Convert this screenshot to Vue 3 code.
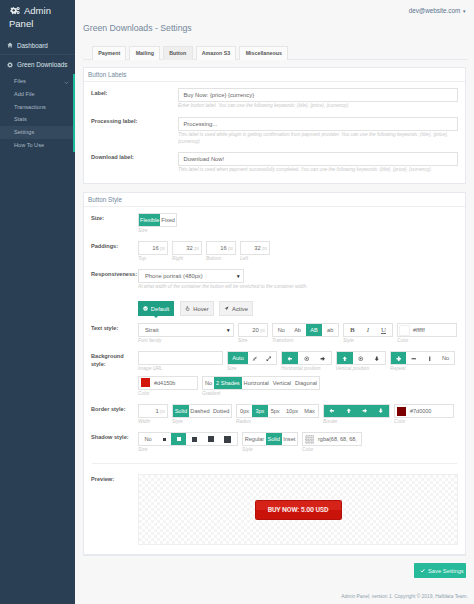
<script setup>
const nav = ['Files', 'Add File', 'Transactions', 'Stats', 'Settings', 'How To Use']
const tabs = ['Payment', 'Mailing', 'Button', 'Amazon S3', 'Miscellaneous']
const labels = [
  { label: 'Label:', value: 'Buy Now: {price} {currency}', hint: 'Enter button label. You can use the following keywords: {title}, {price}, {currency}.' },
  { label: 'Processing label:', value: 'Processing...', hint: 'This label is used while plugin is getting confirmation from payment provider. You can use the following keywords: {title}, {price}, {currency}.' },
  { label: 'Download label:', value: 'Download Now!', hint: 'This label is used when payment successfully completed. You can use the following keywords: {title}, {price}, {currency}.' }
]
const L = 'left', R = 'right', U = 'up', D = 'down'
const seg = (w, hint, items, on) => ({ t: 'seg', w, hint, items, on })
const num = (w, hint, val) => ({ t: 'num', w, hint, val })
const rows = [
  { label: 'Size:', ctls: [seg(39, 'Size', ['Flexible', 'Fixed'], [0])] },
  { label: 'Paddings:', ctls: [num(30, 'Top', 16), num(30, 'Right', 32), num(30, 'Bottom', 16), num(30, 'Left', 32)] },
  { label: 'Responsiveness:', ctls: [{ t: 'sel', w: 106, hint: 'At what width of the container the button will be stretched to the container width.', val: 'Phone portrait (480px)' }] },
  { states: true },
  { label: 'Text style:', ctls: [
    { t: 'sel', w: 96, hint: 'Font family', val: 'Strait' }, num(30, 'Size', 20),
    seg(67, 'Transform', ['No', 'Ab', 'AB', 'ab'], [2]), seg(50, 'Style', ['B', 'I', 'U'], []),
    { t: 'color', w: 60, hint: 'Color', val: '#ffffff', sw: 'white' }] },
  { label: 'Background style:', ctls: [
    { t: 'txt', w: 85, hint: 'Image URL', val: '' },
    seg(50, 'Size', ['Auto', { i: 'shrink' }, { i: 'grow' }], [0]),
    seg(50.5, 'Horizontal position', [{ i: L }, { i: 'dot' }, { i: R }], [0]),
    seg(50.5, 'Vertical position', [{ i: U }, { i: 'dot' }, { i: D }], [0]),
    seg(65, 'Repeat', [{ i: 'plus' }, { i: 'h' }, { i: 'v' }, 'No'], [0])] },
  { tight: true, ctls: [
    { t: 'color', w: 60, hint: 'Color', val: '#d4150b', sw: 'red' },
    seg(118, 'Gradient', ['No', '2 Shades', 'Horizontal', 'Vertical', 'Diagonal'], [1])] },
  { label: 'Border style:', ctls: [
    num(30, 'Width', 1), seg(60, 'Style', ['Solid', 'Dashed', 'Dotted'], [0]),
    seg(83, 'Radius', ['0px', '3px', '5px', '10px', 'Max'], [1]),
    seg(67, 'Border', [{ i: L }, { i: U }, { i: R }, { i: D }], [0, 1, 2, 3]),
    { t: 'color', w: 60, hint: 'Color', val: '#7d0000', sw: 'dark' }] },
  { label: 'Shadow style:', ctls: [
    seg(100, 'Size', ['No', { s: 3 }, { s: 4 }, { s: 5 }, { s: 6 }, { s: 7 }], [2]),
    seg(56, 'Style', ['Regular', 'Solid', 'Inset'], [1]),
    { t: 'color', w: 60, hint: 'Color', val: 'rgba(68, 68, 68,', sw: 'check' }] }
]
const paths = {
  left: 'M1 5 5 1v2.500h4v3H5V9z',
  right: 'M9 5 5 1v2.500H1v3h4V9z',
  up: 'M5 1 1 5h2.500v4h3V5H9z',
  down: 'M5 9 1 5h2.500V1h3v4H9z',
  plus: 'M3.500 1h3v2.500H9v3H6.500V9h-3V6.500H1v-3h2.500z',
  shrink: 'M9 1.500 8.500 1 6 3.500V2H5v3h3V4H6.500zM1 8.500l.5.5L4 6.500V8h1V5H2v1h1.500z',
  grow: 'M6 1h3v3H8V2.700L2.700 8H4v1H1V6h1v1.300L7.300 2H6z',
  h: 'M1 4h8v2H1z',
  v: 'M4 1h2v8H4z'
}
</script>

<template>
  <div class="page">
    <aside class="side">
      <div class="brand">
        <svg class="cogs" viewBox="0 0 16 12"><path d="M5.500 1.500 7 1l.8 1.300 1.500.4L10.500 2l1 1.200-.7 1.300.4 1.500 1.300.7-.4 1.500H10.600l-.8 1.300.5 1.400-1.400.7-1-1.100H6.500l-.9 1.100-1.400-.6.400-1.400-1-1.200L2 7.500l-.3-1.500 1.300-.6.200-1.500-1-1 .9-1.200 1.400.6 1.200-.6z" fill="#ecf0f1"/><circle cx="6.800" cy="5.800" r="1.700" fill="#2a3f54"/><circle cx="13.300" cy="3" r="2.200" fill="#ecf0f1"/><circle cx="13.300" cy="3" r=".8" fill="#2a3f54"/><circle cx="13.300" cy="9" r="2.200" fill="#ecf0f1"/><circle cx="13.300" cy="9" r=".8" fill="#2a3f54"/></svg>
        <span>Admin</span><br>Panel
      </div>
      <div class="menu first">
        <svg class="mi" viewBox="0 0 10 10"><path d="M5 1 .5 5H2v4h2.200V6.500h1.600V9H8V5h1.500z" fill="#b8c7ce"/></svg>Dashboard
      </div>
      <div class="menu">
        <svg class="mi" viewBox="0 0 10 10"><circle cx="5" cy="5" r="2.800" fill="none" stroke="#b8c7ce" stroke-width="2"/><circle cx="5" cy="5" r="4.200" fill="none" stroke="#b8c7ce" stroke-width="1.200" stroke-dasharray="1.500 1.800"/></svg>Green Downloads
      </div>
      <ul class="sub">
        <li v-for="(n, i) in nav" :key="n" :class="{ cur: n === 'Settings' }">
          {{ n }}
          <svg v-if="i === 0" class="chev" viewBox="0 0 8 5"><path d="M1 1l3 3 3-3" fill="none" stroke="#8a9aa8" stroke-width="1"/></svg>
        </li>
      </ul>
      <i class="accent"></i>
    </aside>

    <main class="main">
      <header class="top">dev@website.com <span class="caret">▾</span></header>
      <h1 class="title">Green Downloads - Settings</h1>
      <nav class="tabs">
        <span v-for="t in tabs" :key="t" class="tab" :class="{ on: t === 'Button' }">{{ t }}</span>
      </nav>

      <section class="panel">
        <h2 class="phead">Button Labels</h2>
        <div class="lbody">
          <div v-for="f in labels" :key="f.label" class="lrow">
            <label class="llab">{{ f.label }}</label>
            <div class="lctl">
              <div class="box wide">{{ f.value }}</div>
              <div class="hint">{{ f.hint }}</div>
            </div>
          </div>
        </div>
      </section>

      <section class="panel second">
        <h2 class="phead">Button Style</h2>
        <div class="sbody">
          <template v-for="(r, ri) in rows" :key="ri">
            <div v-if="r.states" class="states">
              <span class="state act">
                <svg viewBox="0 0 10 10"><circle cx="5" cy="5" r="4.500" fill="#fff"/><path d="M2.800 5 4.500 6.700 7.400 3.500" fill="none" stroke="#1f9f83" stroke-width="1.300"/></svg>Default
              </span>
              <span class="state">
                <svg viewBox="0 0 10 10"><path d="M3.500 9 1.800 5.500l1 0 .9 1V1.500a.7.7 0 0 1 1.400 0V4l3 .8V7L7.300 9z" fill="none" stroke="#444" stroke-width=".9"/></svg>Hover
              </span>
              <span class="state">
                <svg viewBox="0 0 10 10"><path d="M9 1 1 5h4v4z" fill="#333"/></svg>Active
              </span>
            </div>
            <div v-else class="srow" :class="{ tight: r.tight }">
              <label class="slab">{{ r.label }}</label>
              <div class="ctls">
                <div v-for="(c, ci) in r.ctls" :key="ci" class="ctl" :style="{ width: c.w + 'px' }">
                  <div v-if="c.t === 'seg'" class="seg">
                    <span v-for="(it, ii) in c.items" :key="ii" class="si" :class="{ on: c.on.includes(ii), b: it === 'B', it: it === 'I', u: it === 'U' }">
                      <template v-if="typeof it === 'string'">{{ it }}</template>
                      <svg v-else-if="it.i === 'dot'" class="ic" viewBox="0 0 10 10"><circle cx="5" cy="5" r="3.500" fill="none" stroke="currentColor" stroke-width="1.100"/><circle cx="5" cy="5" r="1.300" fill="currentColor"/></svg>
                      <svg v-else-if="it.i" class="ic" viewBox="0 0 10 10"><path :d="paths[it.i]" fill="currentColor"/></svg>
                      <i v-else class="sq" :style="{ width: it.s + 'px', height: it.s + 'px' }"></i>
                    </span>
                  </div>
                  <div v-else-if="c.t === 'num'" class="box num">{{ c.val }}<em>px</em></div>
                  <div v-else-if="c.t === 'sel'" class="box sel">{{ c.val }}<b>▾</b></div>
                  <div v-else-if="c.t === 'color'" class="box color"><i class="sw" :class="c.sw"></i><span>{{ c.val }}</span></div>
                  <div v-else class="box"></div>
                  <div class="hint nowrap">{{ c.hint }}</div>
                </div>
              </div>
            </div>
          </template>
          <hr class="rule">
          <div class="prow">
            <label class="slab">Preview:</label>
            <div class="preview"><span class="buy">BUY NOW: 5.00 USD</span></div>
          </div>
        </div>
      </section>

      <div class="actions">
        <span class="save">
          <svg viewBox="0 0 10 10"><path d="M1.500 5.500 4 8 8.800 2.500" fill="none" stroke="#fff" stroke-width="1.800"/></svg>Save Settings
        </span>
      </div>
      <footer class="foot">Admin Panel, version 1. Copyright © 2019, Halfdata Team.</footer>
    </main>
  </div>
</template>

<style scoped>
.page { display: flex; width: 474px; height: 604px; overflow: hidden; font-family: "Liberation Sans", Arial, sans-serif; font-size: 6px; color: #73879c; background: #f7f7f7; }
.side { position: relative; flex: none; width: 75px; background: #2a3f54; color: #dfe5ea; }
.brand { padding: 4px 0 0 9px; height: 36px; box-sizing: border-box; font-size: 9.500px; line-height: 13px; color: #ecf0f1; }
.cogs { width: 11px; height: 9px; margin-right: 4px; vertical-align: -1px; }
.menu { display: flex; align-items: center; box-sizing: border-box; height: 19px; padding-left: 7px; font-size: 6.300px; color: #dbe3e9; }
.menu.first { border-bottom: 1px solid #34495e; }
.mi { width: 6px; height: 6px; margin-right: 4px; }
.sub { list-style: none; margin: 0; padding: 1px 0 0; }
.sub li { position: relative; height: 12.800px; line-height: 12.800px; padding-left: 14px; font-size: 5.600px; color: #a9b7c3; }
.sub li.cur { background: #35495e; }
.chev { position: absolute; right: 6px; top: 6px; width: 5px; height: 3.500px; }
.accent { position: absolute; right: 0; top: 74px; width: 2px; height: 78px; background: #1abb9c; }

.main { flex: 1; min-width: 0; padding: 0 8px; box-sizing: border-box; }
.top { height: 22px; line-height: 21px; text-align: right; font-size: 6.300px; color: #5a738e; }
.caret { font-size: 5px; margin-left: 1px; }
.title { margin: 0; height: 13px; line-height: 13px; font-size: 8.700px; font-weight: 400; color: #73879c; }
.tabs { display: flex; gap: 3px; height: 13px; margin-top: 11px; padding-left: 9px; border-bottom: 1px solid #e6e9ed; margin-right: -2px; }
.tab { padding: 0 5.200px; line-height: 13px; height: 13px; font-size: 5.300px; font-weight: 700; color: #555; background: #fbfbfb; border: 1px solid #e6e6e6; border-bottom: 0; }
.tab.on { background: #eeeeee; }
.panel { margin-top: 7px; background: #fff; border: 1px solid #e6e9ed; }
.panel.second { margin-top: 7.500px; border-bottom-width: 2px; }
.phead { margin: 0; box-sizing: border-box; height: 14px; line-height: 13px; padding-left: 4px; font-size: 6.300px; font-weight: 400; color: #73879c; border-bottom: 1px solid #eee; }
.lbody { padding: 6px 7px 10px 7px; }
.lrow { display: flex; margin-top: 7.500px; }
.lrow:first-child { margin-top: 0; }
.llab { flex: none; width: 87px; padding-top: 1.500px; font-size: 5.600px; font-weight: 700; color: #555; }
.lctl { flex: 1; min-width: 0; }
.box { height: 14px; box-sizing: border-box; border: 1px solid #e2e2e2; background: #fff; line-height: 12px; font-size: 5.800px; color: #666; white-space: nowrap; overflow: hidden; }
.wide { padding-left: 4.500px; }
.hint { min-height: 7px; line-height: 7px; font-size: 4.800px; font-style: italic; color: #c8c8c8; }
.nowrap { white-space: nowrap; }
.sbody { padding: 6px 7px 9px 7px; }
.srow { display: flex; margin-top: 7.250px; }
.srow:first-child { margin-top: 0; }
.srow.tight { margin-top: 3.500px; }
.slab { flex: none; width: 47px; padding-top: 2px; line-height: 7.800px; font-size: 5.600px; font-weight: 700; color: #555; box-sizing: border-box; padding-right: 6px; }
.ctls { display: flex; gap: 4px; }
.ctl { flex: none; }
.seg { display: flex; height: 14px; border: 1px solid #e2e2e2; box-sizing: border-box; background: #fff; }
.si { flex: 1 1 auto; display: flex; align-items: center; justify-content: center; font-size: 5.600px; color: #666; white-space: nowrap; }
.si.on { background: #27a98b; color: #fff; }
.si.b { font-weight: 700; font-family: "Liberation Serif", serif; font-size: 7px; }
.si.it { font-style: italic; font-family: "Liberation Serif", serif; font-size: 7px; }
.si.u { text-decoration: underline; font-family: "Liberation Serif", serif; font-size: 7px; }
.ic { width: 5.500px; height: 5.500px; color: #444; }
.si.on .ic { color: #fff; }
.sq { display: block; background: #3a3f45; }
.si.on .sq { background: #fff; }
.num { text-align: right; padding-right: 2px; }
.num em { margin-left: 1.500px; font-style: normal; font-size: 4.500px; color: #ccc; }
.sel { position: relative; padding-left: 6px; }
.sel b { position: absolute; right: 3px; top: 0; font-size: 5px; color: #333; }
.color { display: flex; align-items: center; }
.color span { margin-left: 4px; font-size: 5.500px; }
.sw { flex: none; width: 9px; height: 9px; margin-left: 2px; border: 0; }
.sw.white { background: #fff; box-shadow: 0 0 0 .5px #e2e2e2; }
.sw.red { background: #d4150b; }
.sw.dark { background: #7d0000; }
.sw.check { background: repeating-conic-gradient(#bbb 0 25%, #eee 0 50%) 0 0 / 2.500px 2.500px; }
.states { display: flex; margin-top: 11px; margin-left: 47px; height: 15px; }
.state { display: flex; align-items: center; justify-content: center; gap: 3px; box-sizing: border-box; width: 34px; height: 15px; margin-left: 5px; font-size: 5.800px; color: #555; background: #f2f2f2; border: 1px solid #e4e4e4; }
.state:first-child { width: 36px; margin-left: 0; margin-right: 1px; }
.state svg { width: 5px; height: 5px; }
.state.act { position: relative; color: #fff; background: #1f9f83; border-color: #1f9f83; }
.state.act::after { content: ""; position: absolute; left: 50%; bottom: -2.500px; margin-left: -2px; border: 2px solid transparent; border-bottom: 0; border-top-color: #1f9f83; }
.states + .srow { margin-top: 7px; }
.rule { margin: 10px 1px 0; border: 0; border-top: 1px solid #eee; }
.prow { display: flex; margin-top: 10px; }
.preview { display: flex; align-items: center; justify-content: center; flex: 1; height: 71px; border: 1px solid #eee; box-sizing: border-box; background: repeating-conic-gradient(#f4f4f4 0 25%, #fff 0 50%) 0 0 / 6px 6px; }
.buy { display: block; box-sizing: border-box; width: 87px; height: 20.500px; line-height: 19px; text-align: center; border: 1px solid #b21008; border-radius: 1.500px; background: linear-gradient(#d6231a 0 50%, #c8120a 50%); color: #f9e4e2; font-family: Roboto, "Liberation Sans", sans-serif; font-weight: 700; font-size: 7px; letter-spacing: -.2px; }
.actions { display: flex; justify-content: flex-end; margin-top: 7px; }
.save { display: flex; align-items: center; gap: 3px; box-sizing: border-box; width: 52px; height: 15px; padding-left: 6px; background: #26b99a; border-radius: 1px; color: #e8fbf6; font-size: 5.800px; }
.save svg { width: 5px; height: 5px; }
.foot { margin-top: 16px; margin-right: -2px; text-align: right; font-size: 4.900px; color: #8f9fae; white-space: nowrap; }
</style>
